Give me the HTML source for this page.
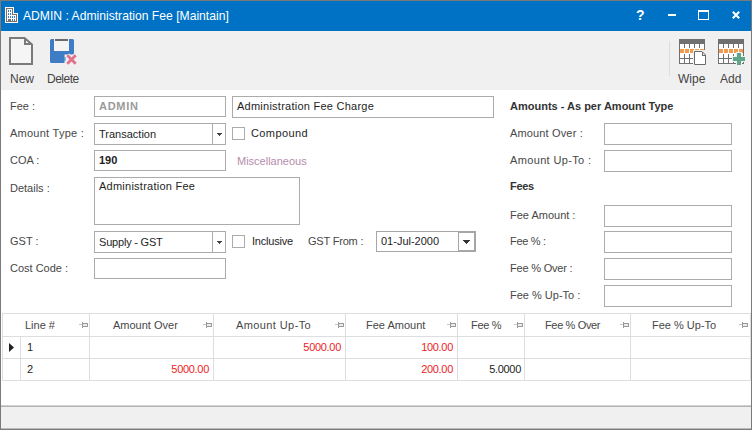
<!DOCTYPE html>
<html><head><meta charset="utf-8">
<style>
*{box-sizing:border-box;margin:0;padding:0}
html,body{width:752px;height:430px;overflow:hidden;background:#fff}
body{position:relative;font-family:"Liberation Sans",sans-serif;}
.a{position:absolute}
.t{position:absolute;white-space:nowrap;font-size:11px;line-height:11px;color:#474747}
.d{color:#1e1e1e}
.b{font-weight:bold}
.win{position:absolute;left:0;top:0;width:752px;height:430px;border:1px solid #7a7a7a;background:#fff}
.title{position:absolute;left:1px;top:1px;width:750px;height:30px;background:#0072c6}
.tb{position:absolute;left:1px;top:31px;width:750px;height:59px;background:#f0f0f0}
.box{position:absolute;border:1px solid #ababab;background:#fff}
.cb{position:absolute;border:1px solid #ababab;background:#fff;width:13px;height:13px}
.sep{position:absolute;width:1px;background:#ababab}
.tl{position:absolute;white-space:nowrap;font-size:12px;line-height:12px;color:#444}
.g{position:absolute;background:#dedede}
.r{color:#ee1c25;letter-spacing:-0.3px}
.n{letter-spacing:-0.3px}
svg{shape-rendering:crispEdges}
</style></head><body>
<div class="win"></div>
<div class="title"></div>
<div class="tb"></div>

<!-- title bar -->
<svg class="a" style="left:0;top:0" width="24" height="28" viewBox="0 0 24 28">
  <polygon points="5,7 14,7 14,13 18,13 18,23 5,23" fill="#fff"/>
  <polygon points="6,8 13,8 13,14 17,14 17,22 6,22" fill="#7b7068"/>
  <polygon points="7,9 12,9 12,15 16,15 16,21 7,21" fill="#fff"/>
  <g fill="#3a78c8">
    <rect x="8" y="10" width="1" height="2"/><rect x="10" y="10" width="1" height="2"/>
    <rect x="8" y="13" width="1" height="2"/><rect x="10" y="13" width="1" height="2"/>
    <rect x="8" y="16" width="1" height="2"/><rect x="10" y="16" width="1" height="2"/>
    <rect x="12" y="16" width="1" height="2"/><rect x="14" y="16" width="1" height="2"/>
    <rect x="12" y="19" width="1" height="2"/><rect x="14" y="19" width="1" height="2"/>
  </g>
  <rect x="8" y="19" width="3" height="2" fill="#7b7068"/>
</svg>
<div class="tl" style="left:23px;top:10px;color:#fff;font-size:12.15px">ADMIN : Administration Fee [Maintain]</div>
<!-- ? -->
<div class="tl b" style="left:636px;top:8px;color:#fff;font-size:14px;line-height:14px">?</div>
<div class="a" style="left:668px;top:14px;width:8px;height:2px;background:#fff"></div>
<div class="a" style="left:698px;top:10px;width:11px;height:10px;border:1px solid #fff;border-top-width:2px"></div>
<svg class="a" style="left:732px;top:11px" width="8" height="8" viewBox="0 0 8 8">
  <path d="M0.8 0.8 L7.2 7.2 M7.2 0.8 L0.8 7.2" stroke="#fff" stroke-width="2" style="shape-rendering:geometricPrecision"/>
</svg>

<!-- toolbar -->
<svg class="a" style="left:8px;top:36px" width="28" height="30" viewBox="0 0 28 30">
  <path d="M2 2 H16.5 L24 8.5 V28 H2 Z" fill="#f5f5f5" stroke="#7a7a7a" stroke-width="2" style="shape-rendering:geometricPrecision"/>
  <path d="M17 2 V7.5 H24" fill="none" stroke="#7a7a7a" stroke-width="2"/>
</svg>
<div class="tl" style="left:10px;top:73px">New</div>

<svg class="a" style="left:48px;top:37px;shape-rendering:geometricPrecision" width="30" height="30" viewBox="0 0 30 30">
  <path d="M2 3.5 Q2 2 3.5 2 H24.5 Q26 2 26 3.5 V17.5 H16.5 V26 H3.5 Q2 26 2 24.5 Z" fill="#3f7cc6"/>
  <rect x="6" y="2" width="15" height="12" fill="#f4f4f4"/>
  <rect x="7" y="2" width="13" height="2" fill="#6b6b6b"/>
  <rect x="16.5" y="20" width="1" height="4" fill="#3f7cc6"/>
  <path d="M19.3 18.3 L27.7 26.7 M27.7 18.3 L19.3 26.7" stroke="#f0f0f0" stroke-width="5"/>
  <path d="M19.3 18.3 L27.7 26.7 M27.7 18.3 L19.3 26.7" stroke="#e2728c" stroke-width="2.9"/>
</svg>
<div class="tl" style="left:47px;top:73px;letter-spacing:-0.5px">Delete</div>

<div class="a" style="left:669px;top:41px;width:1px;height:35px;background:#dddddd"></div>

<!-- wipe icon (origin 677,37) -->
<svg class="a" style="left:677px;top:37px" width="30" height="30" viewBox="0 0 30 30">
  <rect x="2" y="2" width="26" height="5" fill="#707070"/>
  <rect x="3" y="7" width="24" height="19" fill="#fff"/>
  <g fill="#707070">
    <rect x="2" y="2" width="1" height="25"/>
    <rect x="27" y="2" width="1" height="25"/>
    <rect x="2" y="26" width="26" height="1"/>
    <rect x="7" y="7" width="1" height="4"/><rect x="12" y="7" width="1" height="4"/><rect x="17" y="7" width="1" height="4"/><rect x="22" y="7" width="1" height="4"/>
    <rect x="7" y="17" width="1" height="10"/><rect x="12" y="17" width="1" height="10"/><rect x="17" y="17" width="1" height="10"/><rect x="22" y="17" width="1" height="10"/>
    <rect x="2" y="21" width="26" height="1"/>
  </g>
  <g fill="#f39a4c">
    <rect x="3" y="12" width="4" height="4"/><rect x="8" y="12" width="4" height="4"/>
    <rect x="13" y="12" width="4" height="4"/><rect x="18" y="12" width="4" height="4"/><rect x="23" y="12" width="4" height="4"/>
  </g>
  <rect x="16" y="13" width="14" height="16" fill="#f0f0f0"/>
  <path d="M17.5 14.5 H25 L28.5 18 V27.5 H17.5 Z" fill="#fff" stroke="#6a6a6a" stroke-width="1" style="shape-rendering:geometricPrecision"/>
  <path d="M25 14.5 V18 H28.5" fill="none" stroke="#6a6a6a" stroke-width="1"/>
</svg>
<div class="tl" style="left:678px;top:73px">Wipe</div>

<!-- add icon (origin 716,37) -->
<svg class="a" style="left:716px;top:37px" width="32" height="30" viewBox="0 0 32 30">
  <rect x="2" y="2" width="26" height="5" fill="#707070"/>
  <rect x="3" y="7" width="24" height="19" fill="#fff"/>
  <g fill="#707070">
    <rect x="2" y="2" width="1" height="25"/>
    <rect x="27" y="2" width="1" height="25"/>
    <rect x="2" y="26" width="26" height="1"/>
    <rect x="7" y="7" width="1" height="4"/><rect x="12" y="7" width="1" height="4"/><rect x="17" y="7" width="1" height="4"/><rect x="22" y="7" width="1" height="4"/>
    <rect x="7" y="17" width="1" height="10"/><rect x="12" y="17" width="1" height="10"/><rect x="17" y="17" width="1" height="10"/><rect x="22" y="17" width="1" height="10"/>
    <rect x="2" y="21" width="26" height="1"/>
  </g>
  <g fill="#f39a4c">
    <rect x="3" y="12" width="4" height="4"/><rect x="8" y="12" width="4" height="4"/>
    <rect x="13" y="12" width="4" height="4"/><rect x="18" y="12" width="4" height="4"/><rect x="23" y="12" width="4" height="4"/>
  </g>
  <path d="M20 15 H26 V19 H30 V25 H26 V29 H20 V25 H16 V19 H20 Z" fill="#f0f0f0"/>
  <path d="M21 16 H25 V20 H29 V24 H25 V28 H21 V24 H17 V20 H21 Z" fill="#5fa68b"/>
</svg>
<div class="tl" style="left:720px;top:73px">Add</div>

<!-- form left -->
<div class="t" style="left:10px;top:101px">Fee :</div>
<div class="t" style="left:10px;top:128px;letter-spacing:0.25px">Amount Type :</div>
<div class="t" style="left:10px;top:155px">COA :</div>
<div class="t" style="left:10px;top:183px">Details :</div>
<div class="t" style="left:10px;top:236px">GST :</div>
<div class="t" style="left:10px;top:263px">Cost Code :</div>

<div class="box" style="left:94px;top:96px;width:132px;height:21px"></div>
<div class="t b" style="left:99px;top:101px;color:#9a9a9a;letter-spacing:0.7px">ADMIN</div>
<div class="box" style="left:232px;top:96px;width:262px;height:22px"></div>
<div class="t d" style="left:237px;top:101px;letter-spacing:0.25px">Administration Fee Charge</div>

<div class="box" style="left:94px;top:123px;width:132px;height:22px"></div>
<div class="sep" style="left:212px;top:124px;height:20px"></div>
<svg class="a" style="left:217px;top:133px" width="5" height="3" viewBox="0 0 5 3"><path d="M0 0 H5 V1 H4 V2 H3 V3 H2 V2 H1 V1 H0 Z" fill="#444"/></svg>
<div class="t d" style="left:99px;top:129px">Transaction</div>
<div class="cb" style="left:232px;top:127px"></div>
<div class="t d" style="left:251px;top:128px;letter-spacing:0.4px">Compound</div>

<div class="box" style="left:94px;top:150px;width:132px;height:21px"></div>
<div class="t b d" style="left:99px;top:155px">190</div>
<div class="t" style="left:237px;top:156px;color:#b48cac">Miscellaneous</div>

<div class="box" style="left:94px;top:177px;width:206px;height:48px"></div>
<div class="t d" style="left:99px;top:181px;letter-spacing:0.25px">Administration Fee</div>

<div class="box" style="left:94px;top:231px;width:132px;height:22px"></div>
<div class="sep" style="left:212px;top:232px;height:20px"></div>
<svg class="a" style="left:217px;top:241px" width="5" height="3" viewBox="0 0 5 3"><path d="M0 0 H5 V1 H4 V2 H3 V3 H2 V2 H1 V1 H0 Z" fill="#444"/></svg>
<div class="t d" style="left:99px;top:237px;letter-spacing:-0.2px">Supply - GST</div>
<div class="cb" style="left:232px;top:235px"></div>
<div class="t d" style="left:252px;top:236px;letter-spacing:-0.2px">Inclusive</div>
<div class="t" style="left:308px;top:236px;letter-spacing:-0.2px">GST From :</div>
<div class="box" style="left:376px;top:231px;width:100px;height:21px;border-color:#a6a6a6"></div>
<div class="a" style="left:458px;top:231px;width:18px;height:21px;border:1px solid #a6a6a6;border-right-width:2px;border-bottom-width:2px;border-top-width:2px;background:#fff"></div>
<svg class="a" style="left:463px;top:240px" width="7" height="4" viewBox="0 0 7 4"><path d="M0 0 H7 V1 H6 V2 H5 V3 H4 V4 H3 V3 H2 V2 H1 V1 H0 Z" fill="#333"/></svg>
<div class="t d" style="left:381px;top:236px">01-Jul-2000</div>

<div class="box" style="left:94px;top:258px;width:132px;height:21px"></div>

<!-- form right -->
<div class="t b" style="left:510px;top:101px;color:#333">Amounts - As per Amount Type</div>
<div class="t" style="left:510px;top:128px;letter-spacing:0.15px">Amount Over :</div>
<div class="t" style="left:510px;top:155px;letter-spacing:0.35px">Amount Up-To :</div>
<div class="t b" style="left:510px;top:181px;color:#333;letter-spacing:-0.3px">Fees</div>
<div class="t" style="left:510px;top:210px">Fee Amount :</div>
<div class="t" style="left:510px;top:236px;letter-spacing:-0.3px">Fee % :</div>
<div class="t" style="left:510px;top:263px;letter-spacing:-0.2px">Fee % Over :</div>
<div class="t" style="left:510px;top:290px">Fee % Up-To :</div>
<div class="box" style="left:604px;top:123px;width:128px;height:22px"></div>
<div class="box" style="left:604px;top:150px;width:128px;height:22px"></div>
<div class="box" style="left:604px;top:205px;width:128px;height:22px"></div>
<div class="box" style="left:604px;top:231px;width:128px;height:22px"></div>
<div class="box" style="left:604px;top:258px;width:128px;height:22px"></div>
<div class="box" style="left:604px;top:285px;width:128px;height:22px"></div>

<!-- grid -->
<div class="g" style="left:2px;top:313px;width:749px;height:1px"></div>
<div class="g" style="left:2px;top:336px;width:749px;height:1px"></div>
<div class="g" style="left:2px;top:358px;width:749px;height:1px"></div>
<div class="g" style="left:2px;top:380px;width:749px;height:1px"></div>
<div class="g" style="left:2px;top:313px;width:1px;height:68px"></div>
<div class="g" style="left:20px;top:336px;width:1px;height:45px"></div>
<div class="g" style="left:89px;top:313px;width:1px;height:68px"></div>
<div class="g" style="left:213px;top:313px;width:1px;height:68px"></div>
<div class="g" style="left:345px;top:313px;width:1px;height:68px"></div>
<div class="g" style="left:457px;top:313px;width:1px;height:68px"></div>
<div class="g" style="left:524px;top:313px;width:1px;height:68px"></div>
<div class="g" style="left:630px;top:313px;width:1px;height:68px"></div>
<div class="g" style="left:750px;top:313px;width:1px;height:68px"></div>

<div class="t" style="left:25px;top:320px">Line #</div>
<div class="t" style="left:113px;top:320px">Amount Over</div>
<div class="t" style="left:236px;top:320px;letter-spacing:0.4px">Amount Up-To</div>
<div class="t" style="left:366px;top:320px">Fee Amount</div>
<div class="t" style="left:471px;top:320px;letter-spacing:-0.3px">Fee %</div>
<div class="t" style="left:545px;top:320px;letter-spacing:-0.35px">Fee % Over</div>
<div class="t" style="left:652px;top:320px">Fee % Up-To</div>

<!-- pins -->
<svg class="a" style="left:79px;top:322px" width="10" height="6" viewBox="0 0 10 6"><rect x="0" y="2" width="3" height="1" fill="#c8c8c8"/><rect x="4" y="2" width="4" height="2" fill="#ececec"/><rect x="3" y="0" width="1" height="6" fill="#9a9a9a"/><rect x="4" y="1" width="5" height="1" fill="#9a9a9a"/><rect x="4" y="4" width="5" height="1" fill="#9a9a9a"/><rect x="8" y="1" width="1" height="4" fill="#9a9a9a"/></svg>
<svg class="a" style="left:203px;top:322px" width="10" height="6" viewBox="0 0 10 6"><rect x="0" y="2" width="3" height="1" fill="#c8c8c8"/><rect x="4" y="2" width="4" height="2" fill="#ececec"/><rect x="3" y="0" width="1" height="6" fill="#9a9a9a"/><rect x="4" y="1" width="5" height="1" fill="#9a9a9a"/><rect x="4" y="4" width="5" height="1" fill="#9a9a9a"/><rect x="8" y="1" width="1" height="4" fill="#9a9a9a"/></svg>
<svg class="a" style="left:335px;top:322px" width="10" height="6" viewBox="0 0 10 6"><rect x="0" y="2" width="3" height="1" fill="#c8c8c8"/><rect x="4" y="2" width="4" height="2" fill="#ececec"/><rect x="3" y="0" width="1" height="6" fill="#9a9a9a"/><rect x="4" y="1" width="5" height="1" fill="#9a9a9a"/><rect x="4" y="4" width="5" height="1" fill="#9a9a9a"/><rect x="8" y="1" width="1" height="4" fill="#9a9a9a"/></svg>
<svg class="a" style="left:447px;top:322px" width="10" height="6" viewBox="0 0 10 6"><rect x="0" y="2" width="3" height="1" fill="#c8c8c8"/><rect x="4" y="2" width="4" height="2" fill="#ececec"/><rect x="3" y="0" width="1" height="6" fill="#9a9a9a"/><rect x="4" y="1" width="5" height="1" fill="#9a9a9a"/><rect x="4" y="4" width="5" height="1" fill="#9a9a9a"/><rect x="8" y="1" width="1" height="4" fill="#9a9a9a"/></svg>
<svg class="a" style="left:514px;top:322px" width="10" height="6" viewBox="0 0 10 6"><rect x="0" y="2" width="3" height="1" fill="#c8c8c8"/><rect x="4" y="2" width="4" height="2" fill="#ececec"/><rect x="3" y="0" width="1" height="6" fill="#9a9a9a"/><rect x="4" y="1" width="5" height="1" fill="#9a9a9a"/><rect x="4" y="4" width="5" height="1" fill="#9a9a9a"/><rect x="8" y="1" width="1" height="4" fill="#9a9a9a"/></svg>
<svg class="a" style="left:620px;top:322px" width="10" height="6" viewBox="0 0 10 6"><rect x="0" y="2" width="3" height="1" fill="#c8c8c8"/><rect x="4" y="2" width="4" height="2" fill="#ececec"/><rect x="3" y="0" width="1" height="6" fill="#9a9a9a"/><rect x="4" y="1" width="5" height="1" fill="#9a9a9a"/><rect x="4" y="4" width="5" height="1" fill="#9a9a9a"/><rect x="8" y="1" width="1" height="4" fill="#9a9a9a"/></svg>
<svg class="a" style="left:739px;top:322px" width="10" height="6" viewBox="0 0 10 6"><rect x="0" y="2" width="3" height="1" fill="#c8c8c8"/><rect x="4" y="2" width="4" height="2" fill="#ececec"/><rect x="3" y="0" width="1" height="6" fill="#9a9a9a"/><rect x="4" y="1" width="5" height="1" fill="#9a9a9a"/><rect x="4" y="4" width="5" height="1" fill="#9a9a9a"/><rect x="8" y="1" width="1" height="4" fill="#9a9a9a"/></svg>

<svg class="a" style="left:9px;top:343px;shape-rendering:geometricPrecision" width="6" height="10" viewBox="0 0 6 10"><path d="M0 0 V9 L5 4.5 Z" fill="#222"/></svg>
<div class="t d" style="left:27px;top:342px">1</div>
<div class="t d" style="left:27px;top:364px">2</div>
<div class="t r" style="left:290px;top:342px;width:51px;text-align:right">5000.00</div>
<div class="t r" style="left:400px;top:342px;width:53px;text-align:right">100.00</div>
<div class="t r" style="left:150px;top:364px;width:59px;text-align:right">5000.00</div>
<div class="t r" style="left:400px;top:364px;width:53px;text-align:right">200.00</div>
<div class="t d n" style="left:470px;top:364px;width:51px;text-align:right">5.0000</div>

<!-- status bar -->
<div class="a" style="left:1px;top:405px;width:750px;height:1px;background:#d2d2d2"></div>
<div class="a" style="left:1px;top:406px;width:750px;height:1px;background:#b2b2b2"></div>
<div class="a" style="left:1px;top:407px;width:750px;height:22px;background:#f0f0f0"></div>
<div class="a" style="left:1px;top:428px;width:750px;height:1px;background:#bcbcbc"></div>

</body></html>
